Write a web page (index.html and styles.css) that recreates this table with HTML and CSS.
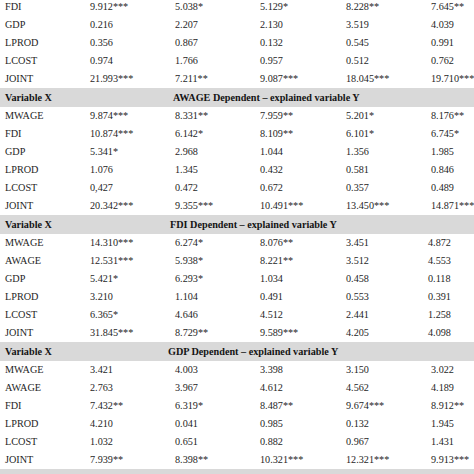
FILE: index.html
```html
<!DOCTYPE html>
<html>
<head>
<meta charset="utf-8">
<link rel="stylesheet" href="styles.css">
</head>
<body>
<div class="page">
<table class="results">
  <colgroup>
    <col class="c-label"><col class="c-val"><col class="c-val"><col class="c-val3"><col class="c-val"><col class="c-last">
  </colgroup>
  <tbody>
    <tr><td class="lab">FDI</td><td>9.912***</td><td>5.038*</td><td>5.129*</td><td>8.228**</td><td>7.645**</td></tr>
    <tr><td class="lab">GDP</td><td>0.216</td><td>2.207</td><td>2.130</td><td>3.519</td><td>4.039</td></tr>
    <tr><td class="lab">LPROD</td><td>0.356</td><td>0.867</td><td>0.132</td><td>0.545</td><td>0.991</td></tr>
    <tr><td class="lab">LCOST</td><td>0.974</td><td>1.766</td><td>0.957</td><td>0.512</td><td>0.762</td></tr>
    <tr><td class="lab">JOINT</td><td>21.993***</td><td>7.211**</td><td>9.087***</td><td>18.045***</td><td>19.710***</td></tr>

    <tr class="band"><td colspan="2" class="lab">Variable X</td><td colspan="4" class="title t-awage">AWAGE Dependent – explained variable Y</td></tr>
    <tr><td class="lab">MWAGE</td><td>9.874***</td><td>8.331**</td><td>7.959**</td><td>5.201*</td><td>8.176**</td></tr>
    <tr><td class="lab">FDI</td><td>10.874***</td><td>6.142*</td><td>8.109**</td><td>6.101*</td><td>6.745*</td></tr>
    <tr><td class="lab">GDP</td><td>5.341*</td><td>2.968</td><td>1.044</td><td>1.356</td><td>1.985</td></tr>
    <tr><td class="lab">LPROD</td><td>1.076</td><td>1.345</td><td>0.432</td><td>0.581</td><td>0.846</td></tr>
    <tr><td class="lab">LCOST</td><td>0,427</td><td>0.472</td><td>0.672</td><td>0.357</td><td>0.489</td></tr>
    <tr><td class="lab">JOINT</td><td>20.342***</td><td>9.355***</td><td>10.491***</td><td>13.450***</td><td>14.871***</td></tr>

    <tr class="band"><td colspan="2" class="lab">Variable X</td><td colspan="4" class="title t-fdi">FDI Dependent – explained variable Y</td></tr>
    <tr class="fdi"><td class="lab">MWAGE</td><td>14.310***</td><td>6.274*</td><td>8.076**</td><td>3.451</td><td>4.872</td></tr>
    <tr class="fdi"><td class="lab">AWAGE</td><td>12.531***</td><td>5.938*</td><td>8.221**</td><td>3.512</td><td>4.553</td></tr>
    <tr class="fdi"><td class="lab">GDP</td><td>5.421*</td><td>6.293*</td><td>1.034</td><td>0.458</td><td>0.118</td></tr>
    <tr class="fdi"><td class="lab">LPROD</td><td>3.210</td><td>1.104</td><td>0.491</td><td>0.553</td><td>0.391</td></tr>
    <tr class="fdi"><td class="lab">LCOST</td><td>6.365*</td><td>4.646</td><td>4.512</td><td>2.441</td><td>1.258</td></tr>
    <tr class="fdi"><td class="lab">JOINT</td><td>31.845***</td><td>8.729**</td><td>9.589***</td><td>4.205</td><td>4.098</td></tr>

    <tr class="band"><td colspan="2" class="lab">Variable X</td><td colspan="4" class="title t-gdp">GDP Dependent – explained variable Y</td></tr>
    <tr><td class="lab">MWAGE</td><td>3.421</td><td>4.003</td><td>3.398</td><td>3.150</td><td>3.022</td></tr>
    <tr><td class="lab">AWAGE</td><td>2.763</td><td>3.967</td><td>4.612</td><td>4.562</td><td>4.189</td></tr>
    <tr><td class="lab">FDI</td><td>7.432**</td><td>6.319*</td><td>8.487**</td><td>9.674***</td><td>8.912**</td></tr>
    <tr><td class="lab">LPROD</td><td>4.210</td><td>0.041</td><td>0.985</td><td>0.132</td><td>1.945</td></tr>
    <tr><td class="lab">LCOST</td><td>1.032</td><td>0.651</td><td>0.882</td><td>0.967</td><td>1.431</td></tr>
    <tr><td class="lab">JOINT</td><td>7.939**</td><td>8.398**</td><td>10.321***</td><td>12.321***</td><td>9.913***</td></tr>

    <tr class="band"><td colspan="2" class="lab">&nbsp;</td><td colspan="4" class="title">&nbsp;</td></tr>
  </tbody>
</table>
</div>
</body>
</html>
```

FILE: styles.css
```css
html, body {
  margin: 0;
  padding: 0;
  background: #ffffff;
  overflow: hidden;
}

.page {
  width: 474px;
  height: 474px;
  overflow: hidden;
}

.results {
  margin-top: -2px;
  width: 474px;
  border-collapse: collapse;
  table-layout: fixed;
  font-family: "Liberation Serif", "Times New Roman", serif;
  font-size: 10.2px;
  color: #1e1e1e;
}

.c-label { width: 90px; }
.c-val { width: 85px; }
.c-val3 { width: 86px; }
.c-last { width: 43px; }

.results td {
  padding: 0;
  height: 18px;
  line-height: 18px;
  white-space: nowrap;
  vertical-align: middle;
}

.results td.lab {
  padding-left: 5px;
}

.band td {
  height: 19px;
  line-height: 19px;
  background: #d9d9d9;
  font-weight: bold;
  color: #141414;
}

.band td.title {
  overflow: visible;
}

.t-awage { text-indent: -2px; }
.t-fdi { text-indent: -5px; }
.t-gdp { text-indent: -7px; }

.fdi td:last-child {
  text-indent: -3px;
}
```
